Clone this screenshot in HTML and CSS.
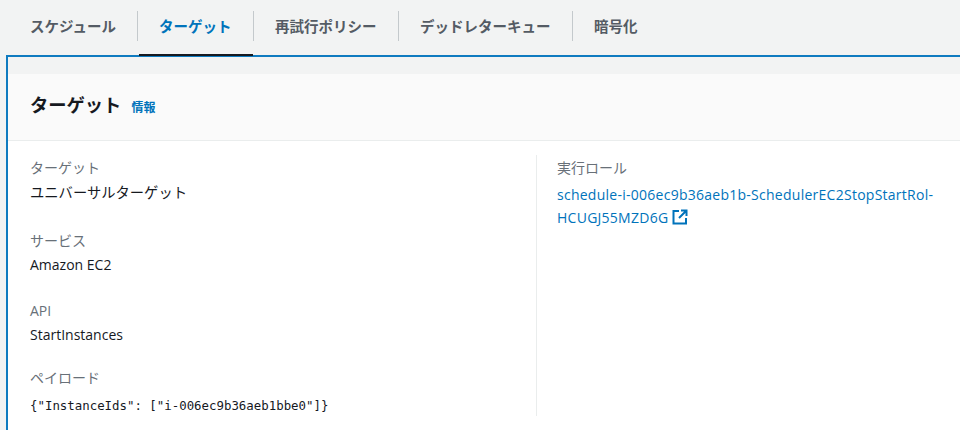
FILE: index.html
```html
<!DOCTYPE html>
<html lang="ja">
<head>
<meta charset="utf-8">
<title>ターゲット</title>
<link rel="stylesheet" href="styles.css">
</head>
<body>
<nav class="tabs">
  <a class="tab tab-1">スケジュール</a>
  <a class="tab tab-2 active">ターゲット</a>
  <a class="tab tab-3">再試行ポリシー</a>
  <a class="tab tab-4">デッドレターキュー</a>
  <a class="tab tab-5">暗号化</a>
</nav>
<main class="panel">
  <section class="card">
    <header class="card-head">
      <h2>ターゲット</h2>
      <a class="info">情報</a>
    </header>
    <div class="cols">
      <div class="col col-left">
        <div class="field f1"><div class="label first">ターゲット</div><div class="value jp">ユニバーサルターゲット</div></div>
        <div class="field f2"><div class="label">サービス</div><div class="value">Amazon EC2</div></div>
        <div class="field f3"><div class="label">API</div><div class="value">StartInstances</div></div>
        <div class="field"><div class="label pay">ペイロード</div><div class="value mono">{"InstanceIds": ["i-006ec9b36aeb1bbe0"]}</div></div>
      </div>
      <div class="col col-right">
        <div class="field"><div class="label first">実行ロール</div>
          <div class="value link">schedule-i-006ec9b36aeb1b-SchedulerEC2StopStartRol-<br>HCUGJ55MZD6G <svg class="ext" viewBox="0 0 16 16" width="16" height="16" aria-hidden="true"><path d="M7 2H1.500v12.500H14V9" fill="none" stroke="currentColor" stroke-width="2"/><path d="M9 1.500h5.500V7M14 2 7 9" fill="none" stroke="currentColor" stroke-width="2"/></svg></div>
        </div>
      </div>
    </div>
  </section>
</main>
</body>
</html>
```
FILE: styles.css
```css
* { box-sizing: border-box; }
html, body { margin: 0; padding: 0; }
body {
  width: 960px;
  height: 430px;
  overflow: hidden;
  background: #f2f3f3;
  font-family: "Open Sans", "Noto Sans CJK JP", sans-serif;
  color: #16191f;
}
.tabs {
  display: flex;
  height: 55px;
  padding-top: 11px;
}
.tab {
  display: block;
  height: 30px;
  line-height: 32px;
  font-size: 14.500px;
  font-weight: 700;
  color: #545b64;
  border-right: 1px solid #c4c9cc;
  position: relative;
  white-space: nowrap;
}
.tab-1 { width: 138px; padding-left: 30px; }
.tab-2 { width: 116px; padding-left: 21px; }
.tab-3 { width: 145px; padding-left: 21px; }
.tab-4 { width: 174px; padding-left: 21px; }
.tab-5 { border-right: 0; padding-left: 21px; }
.active { color: #0073bb; }
.active::after {
  content: "";
  position: absolute;
  left: 1px;
  right: 0;
  top: 43px;
  height: 2px;
  background: #16191f;
}
.panel {
  margin-left: 6px;
  height: 375px;
  border-top: 2px solid #0f7bc0;
  border-left: 2px solid #0f7bc0;
  padding-top: 17px;
}
.card { background: #fff; height: 356px; }
.card-head {
  height: 67px;
  background: #fafafa;
  border-bottom: 1px solid #eaeded;
  display: flex;
  align-items: center;
  padding: 0 0 7px 22px;
  gap: 10px;
}
.card-head h2 {
  margin: 0;
  font-size: 18.300px;
  font-weight: 700;
  color: #16191f;
}
.info { font-size: 12px; font-weight: 700; color: #0073bb; padding-top: 6px; }
.cols { display: flex; padding-top: 14px; }
.col-left {
  width: 529px;
  height: 261px;
  padding-left: 22px;
  border-right: 1px solid #eaeded;
}
.col-right { padding-left: 20px; }
.field { margin: 0; }
.f1 { margin-bottom: 24px; }
.f2 { margin-bottom: 22px; }
.f3 { margin-bottom: 17px; }
.label { font-size: 14px; line-height: 24px; color: #687078; }
.first { line-height: 26px; }
.pay { line-height: 27px; }
.value { font-size: 14px; line-height: 24px; color: #16191f; }
.jp { font-size: 14.300px; }
.mono { font-family: "DejaVu Sans Mono", monospace; font-size: 12.400px; margin-top: 3px; }
.link { color: #0073bb; letter-spacing: 0.26px; line-height: 23px; margin-top: 2px; }
.ext { vertical-align: -2px; }
```
